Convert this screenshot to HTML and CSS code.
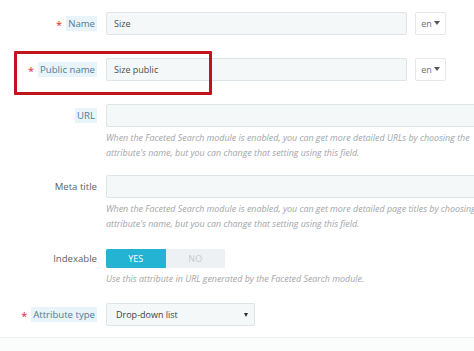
FILE: index.html
```html
<!DOCTYPE html>
<html>
<head>
<meta charset="utf-8">
<link rel="stylesheet" href="styles.css">
</head>
<body>
<div class="page">
  <form class="form">
    <div class="row">
      <div class="lbl"><span class="req">*</span><span class="chip">Name</span></div>
      <div class="ctl">
        <div class="line">
          <div class="input narrow">Size</div>
          <div class="lang">en<span class="caret"></span></div>
        </div>
      </div>
    </div>
    <div class="row">
      <div class="lbl"><span class="req">*</span><span class="chip">Public name</span></div>
      <div class="ctl">
        <div class="line">
          <div class="input narrow">Size public</div>
          <div class="lang">en<span class="caret"></span></div>
        </div>
      </div>
    </div>
    <div class="row has-help">
      <div class="lbl"><span class="chip">URL</span></div>
      <div class="ctl">
        <div class="input wide"></div>
        <p class="help">When the Faceted Search module is enabled, you can get more detailed URLs by choosing the<br>attribute's name, but you can change that setting using this field.</p>
      </div>
    </div>
    <div class="row has-help">
      <div class="lbl"><span class="plain">Meta title</span></div>
      <div class="ctl">
        <div class="input wide"></div>
        <p class="help">When the Faceted Search module is enabled, you can get more detailed page titles by choosing<br>attribute's name, but you can change that setting using this field.</p>
      </div>
    </div>
    <div class="row toggle-row">
      <div class="lbl tall"><span class="plain">Indexable</span></div>
      <div class="ctl">
        <div class="toggle-line">
          <div class="toggle"><span class="yes">YES</span><span class="no">NO</span></div>
        </div>
        <p class="help help-tight">Use this attribute in URL generated by the Faceted Search module.</p>
      </div>
    </div>
    <div class="row last">
      <div class="lbl"><span class="req">*</span><span class="chip">Attribute type</span></div>
      <div class="ctl">
        <div class="select">Drop-down list<span class="caret dark"></span></div>
      </div>
    </div>
  </form>
  <div class="footer"></div>
  <div class="highlight"></div>
</div>
</body>
</html>
```

FILE: styles.css
```css
html, body {
  margin: 0;
  padding: 0;
  background: #ffffff;
  overflow: hidden;
}
body {
  width: 474px;
  height: 351px;
  font-family: "Open Sans", "DejaVu Sans", sans-serif;
}
.page {
  position: relative;
  width: 474px;
  height: 351px;
  overflow: hidden;
}
.form {
  display: flex;
  flex-direction: column;
  padding-top: 12px;
  width: 620px;
  margin: 0;
}
.row {
  display: flex;
  align-items: flex-start;
  margin-bottom: 23px;
}
.row.has-help { margin-bottom: 15px; }
.row.toggle-row { margin-bottom: 17px; }
.row.last { margin-bottom: 0; }
.lbl {
  width: 97px;
  flex: none;
  height: 23px;
  display: flex;
  align-items: center;
  justify-content: flex-end;
  gap: 4px;
  margin-right: 9px;
}
.lbl.tall { height: 24px; }
.req {
  color: #e0263e;
  font-size: 11px;
  line-height: 10px;
  position: relative;
  top: 1px;
}
.chip {
  background: #e8f4fa;
  color: #4f7c97;
  font-size: 9.6px;
  line-height: 15px;
  padding: 0 2px;
  white-space: nowrap;
}
.plain {
  color: #5c5f63;
  font-size: 9.6px;
  line-height: 15px;
  white-space: nowrap;
}
.ctl {
  flex: 1;
  display: flex;
  flex-direction: column;
}
.line {
  display: flex;
  gap: 8px;
}
.input {
  box-sizing: border-box;
  height: 23px;
  background: #f5f8f9;
  border: 1px solid #dde5e8;
  border-radius: 2px;
  font-size: 9px;
  color: #4a4d51;
  padding: 0 7px;
  display: flex;
  align-items: center;
}
.input.narrow { width: 301px; }
.input.wide { width: 420px; }
.lang {
  box-sizing: border-box;
  width: 31px;
  height: 23px;
  border: 1px solid #e3e7ea;
  background: #fff;
  border-radius: 2px;
  font-size: 9px;
  color: #6c6f73;
  display: flex;
  align-items: center;
  justify-content: center;
  gap: 2px;
  padding-bottom: 1px;
}
.caret {
  width: 0;
  height: 0;
  border-left: 3.5px solid transparent;
  border-right: 3.5px solid transparent;
  border-top: 4px solid #55585c;
}
.caret.dark { border-top-color: #2b2e31; border-left-width: 2.5px; border-right-width: 2.5px; border-top-width: 4px; }
.help {
  margin: 3px 0 0 0;
  font-size: 8.9px;
  line-height: 15px;
  font-style: italic;
  color: #a2a5a8;
  white-space: nowrap;
}
.help-tight { margin-top: 1px; }
.toggle-line {
  height: 24px;
  display: flex;
  align-items: center;
}
.toggle {
  display: flex;
  height: 19px;
  width: 119px;
  border-radius: 2px;
  overflow: hidden;
  font-size: 9px;
  box-shadow: inset 0 0 0 1px #e2e6e8;
}
.toggle span {
  flex: 1;
  display: flex;
  align-items: center;
  justify-content: center;
}
.yes {
  background: #25b3d3;
  color: #ffffff;
}
.no {
  background: #eef1f3;
  color: #c7cacd;
}
.select {
  box-sizing: border-box;
  width: 149px;
  height: 23px;
  background: #f5f8f9;
  border: 1px solid #dde5e8;
  border-radius: 2px;
  font-size: 9px;
  color: #3e4145;
  padding: 0 6px 0 9px;
  display: flex;
  align-items: center;
  justify-content: space-between;
}
.footer {
  margin-top: 11px;
  height: 30px;
  border-top: 1px solid #eef1f3;
  background: #fbfcfc;
}
.highlight {
  position: absolute;
  left: 14px;
  top: 51px;
  width: 198px;
  height: 44px;
  box-sizing: border-box;
  border: 3px solid #c2121e;
  border-radius: 1px;
}
```
